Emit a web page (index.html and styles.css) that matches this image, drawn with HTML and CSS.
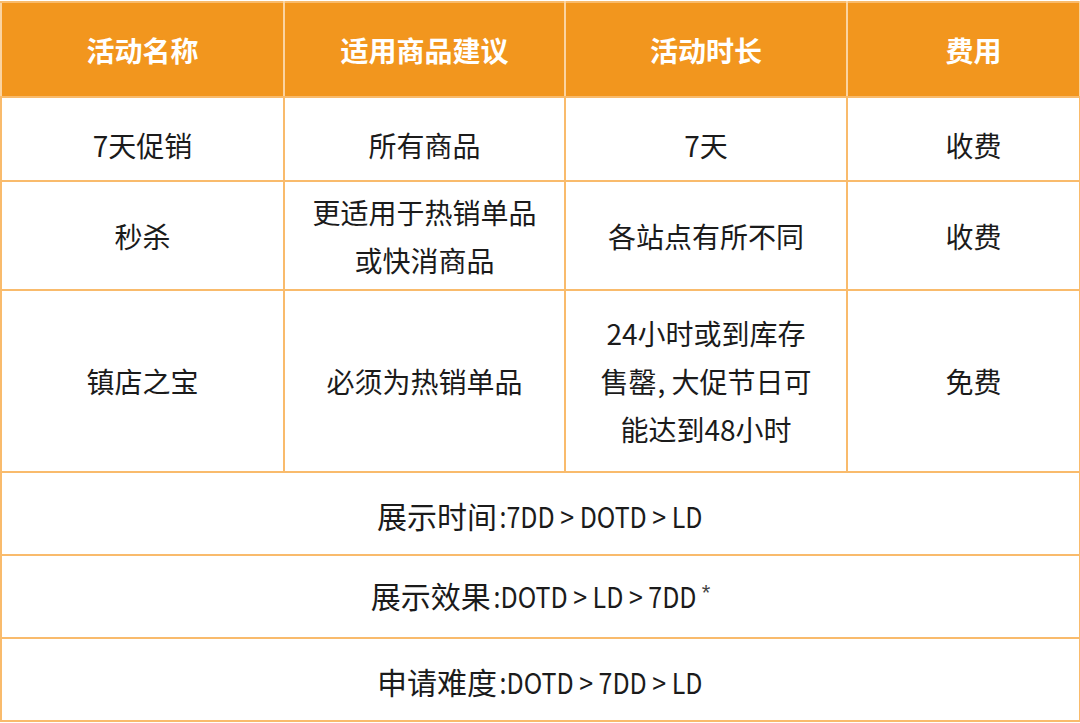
FILE: index.html
```html
<!DOCTYPE html>
<html lang="zh-CN">
<head>
<meta charset="utf-8">
<link rel="stylesheet" href="styles.css">
</head>
<body>
<table class="promo">
  <colgroup>
    <col class="c1"><col class="c2"><col class="c3"><col class="c4">
  </colgroup>
  <thead>
    <tr class="head">
      <th>活动名称</th>
      <th>适用商品建议</th>
      <th>活动时长</th>
      <th class="fee">费用</th>
    </tr>
  </thead>
  <tbody>
    <tr class="r1">
      <td>7天促销</td>
      <td>所有商品</td>
      <td>7天</td>
      <td class="fee">收费</td>
    </tr>
    <tr class="r2">
      <td>秒杀</td>
      <td>更适用于热销单品<br>或快消商品</td>
      <td>各站点有所不同</td>
      <td class="fee">收费</td>
    </tr>
    <tr class="r3">
      <td>镇店之宝</td>
      <td>必须为热销单品</td>
      <td>24小时或到库存<br>售罄<span class="comma">,</span>大促节日可<br>能达到48小时</td>
      <td class="fee">免费</td>
    </tr>
    <tr class="wide">
      <td colspan="4">展示时间<span class="lat">:7DD &gt; DOTD &gt; LD</span></td>
    </tr>
    <tr class="wide">
      <td colspan="4">展示效果<span class="lat">:DOTD &gt; LD &gt; 7DD</span><span class="star">*</span></td>
    </tr>
    <tr class="wide">
      <td colspan="4">申请难度<span class="lat">:DOTD &gt; 7DD &gt; LD</span></td>
    </tr>
  </tbody>
</table>
</body>
</html>
```

FILE: styles.css
```css
html, body {
  margin: 0;
  padding: 0;
  background: #ffffff;
}

.promo {
  width: 1079px;
  border-collapse: collapse;
  table-layout: fixed;
  font-family: "Noto Sans CJK SC", "Noto Sans", sans-serif;
  font-size: 28px;
  line-height: 48px;
  color: #1b1b1b;
  margin-top: 1px;
}

.c1 { width: 283px; }
.c2 { width: 281px; }
.c3 { width: 282px; }
.c4 { width: 233px; }

.promo th,
.promo td {
  border: 2px solid #f9bb6c;
  text-align: center;
  vertical-align: middle;
  padding: 0;
}

.promo th {
  background: #f2961e;
  color: #ffffff;
  font-weight: 700;
  border-left-color: #fbd3a0;
  border-right-color: #fbd3a0;
}

.promo .fee {
  padding-left: 20px;
}

.head { height: 95px; }
.r1 { height: 84px; }
.r1 td { padding-top: 12px; }
.r2 { height: 109px; }
.r3 { height: 182px; }
.wide { height: 83px; }
.wide td {
  padding-top: 2px;
  font-size: 30px;
}

.comma {
  display: inline-block;
  width: 14px;
  text-align: left;
  padding-left: 1px;
}

.lat {
  display: inline-block;
  font-size: 29px;
  padding-left: 3px;
  transform: scaleX(0.86);
  transform-origin: left center;
  margin-right: -32px;
}

.star {
  position: relative;
  top: -8px;
  margin-left: 4px;
  font-family: "Liberation Sans", sans-serif;
  font-size: 22px;
  color: #444;
}
```
